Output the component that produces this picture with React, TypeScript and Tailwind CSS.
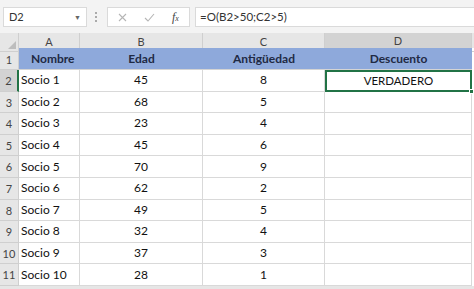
import React from "react";

const rows: [string, string, string][] = [
  ["Socio 1", "45", "8"],
  ["Socio 2", "68", "5"],
  ["Socio 3", "23", "4"],
  ["Socio 4", "45", "6"],
  ["Socio 5", "70", "9"],
  ["Socio 6", "62", "2"],
  ["Socio 7", "49", "5"],
  ["Socio 8", "32", "4"],
  ["Socio 9", "37", "3"],
  ["Socio 10", "28", "1"],
];

const cols = "grid grid-cols-[19px_61px_123px_122px_147px_2px]";

export default function App() {
  return (
    <div className="w-[474px] h-[289px] overflow-hidden bg-white text-[#222]" style={{ fontFamily: "Lato, 'Open Sans', sans-serif" }}>
      {/* toolbar */}
      <div className="h-[33px] bg-[#f3f3f3] flex items-center gap-0 pt-[1px]">
        <div className="ml-[3px] w-[84px] h-[20px] bg-white border border-[#dadada] flex items-center justify-between px-[5px] text-[11px] text-[#333]">
          <span>D2</span>
          <span className="text-[7px] text-[#666]">▼</span>
        </div>
        <div className="w-[18px] flex flex-col items-center gap-[2px]">
          <span className="w-[2px] h-[2px] bg-[#aaa]" />
          <span className="w-[2px] h-[2px] bg-[#aaa]" />
          <span className="w-[2px] h-[2px] bg-[#aaa]" />
        </div>
        <div className="ml-[2px] w-[83px] h-[20px] bg-white border border-[#dadada] flex items-center">
          <svg className="ml-[10px]" width="9" height="9" viewBox="0 0 9 9"><path d="M1 1L8 8M8 1L1 8" stroke="#b5b5b5" strokeWidth="1.1" /></svg>
          <svg className="ml-[17px]" width="11" height="9" viewBox="0 0 11 9"><path d="M1 5L4 8L10 1" stroke="#b5b5b5" strokeWidth="1.1" fill="none" /></svg>
          <span className="ml-[17px] text-[12px] italic text-[#444]" style={{ fontFamily: "'Liberation Serif', serif" }}>f<span className="text-[8px]">x</span></span>
        </div>
        <div className="ml-[5px] flex-1 h-[20px] bg-white border border-[#dadada] border-r-0 flex items-center px-[4px] text-[11.5px] text-[#333]">
          =O(B2&gt;50;C2&gt;5)
        </div>
      </div>
      {/* column headers */}
      <div className={`${cols} h-[15px] bg-[#e6e6e6] text-[11px] text-[#444]`}>
        <div className="border-r border-b border-[#cfcfcf] relative">
          <svg className="absolute right-[2px] bottom-[2px]" width="8" height="8" viewBox="0 0 8 8"><path d="M8 0L8 8L0 8Z" fill="#bdbdbd" /></svg>
        </div>
        {["A", "B", "C"].map((c) => (
          <div key={c} className="border-r border-b border-[#cfcfcf] flex items-center justify-center">{c}</div>
        ))}
        <div className="bg-[#d3d3d3] border-r border-b-2 border-b-[#217346] border-r-[#cfcfcf] flex items-center justify-center">D</div>
        <div className="border-b border-[#cfcfcf]" />
      </div>
      {/* row 1 */}
      <div className={`${cols} h-[22px] text-[12px]`}>
        <div className="bg-[#e6e6e6] border-r border-b border-[#cfcfcf] flex items-end justify-center pb-[1px] text-[11px] text-[#444]">1</div>
        <div className="bg-[#8ea9db] border-b border-[#d4d4d4] flex items-center pl-[12px] font-bold text-[#1f2a44]">Nombre</div>
        <div className="bg-[#8ea9db] border-b border-[#d4d4d4] flex items-center justify-center font-bold text-[#1f2a44]">Edad</div>
        <div className="bg-[#8ea9db] border-b border-[#d4d4d4] flex items-center justify-center font-bold text-[#1f2a44]">Antigüedad</div>
        <div className="bg-[#8ea9db] border-b border-[#d4d4d4] flex items-center justify-center font-bold text-[#1f2a44]">Descuento</div>
        <div />
      </div>
      {rows.map((r, i) => (
        <div key={i} className={`${cols} h-[21.6px] text-[12px] text-[#111]`}>
          <div className={`${i === 0 ? "bg-[#d3d3d3] border-r-2 border-r-[#217346]" : "bg-[#e6e6e6] border-r border-r-[#cfcfcf]"} border-b border-b-[#cfcfcf] flex items-end justify-center pb-[1px] text-[11px] text-[#444]`}>{i + 2}</div>
          <div className="border-r border-b border-[#d9d9d9] flex items-center pl-[2px]">{r[0]}</div>
          <div className="border-r border-b border-[#d9d9d9] flex items-center justify-center">{r[1]}</div>
          <div className="border-r border-b border-[#d9d9d9] flex items-center justify-center">{r[2]}</div>
          {i === 0 ? (
            <div className="relative border-2 border-[#217346] flex items-center justify-center text-[11.5px]">
              VERDADERO
              <span className="absolute right-[-4px] bottom-[-4px] w-[5px] h-[5px] bg-[#217346] border border-white" />
            </div>
          ) : (
            <div className="border-r border-b border-[#d9d9d9]" />
          )}
          <div />
        </div>
      ))}
      <div className="h-[4px] bg-[#e6e6e6]" />
    </div>
  );
}
